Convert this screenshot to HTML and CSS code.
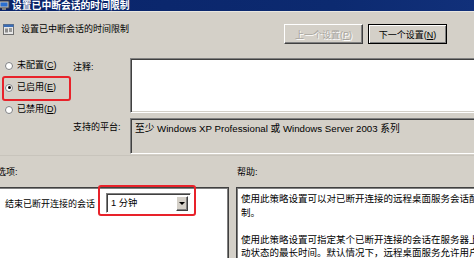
FILE: index.html
```html
<!DOCTYPE html>
<html lang="zh-CN">
<head>
<meta charset="utf-8">
<title>设置已中断会话的时间限制</title>
<link rel="stylesheet" href="styles.css">
</head>
<body>
<div class="window">
  <div class="titlebar">
    <svg class="title-icon" width="11" height="11" viewBox="0 0 11 11">
      <rect x="0" y="1" width="10" height="7" fill="#c0c0c0" stroke="#404040" stroke-width="1"/>
      <rect x="1.5" y="2.5" width="7" height="4" fill="#2a6fd0"/>
      <rect x="3" y="8" width="4" height="2" fill="#808080"/>
    </svg>
    <span class="title-text">设置已中断会话的时间限制</span>
  </div>

  <div class="header">
    <div class="policy-name">
      <svg class="policy-icon" width="11" height="11" viewBox="0 0 11 11">
        <rect x="0.5" y="0.5" width="10" height="10" fill="#e8e8e8" stroke="#707070"/>
        <rect x="0.5" y="0.5" width="10" height="2.5" fill="#3b6db5"/>
        <rect x="2" y="4.5" width="3" height="4" fill="#8c8c8c"/>
        <path d="M6 5 h3 M6 7 h3" stroke="#4a4a4a" stroke-width="1"/>
      </svg>
      <span>设置已中断会话的时间限制</span>
    </div>
    <div class="nav-buttons">
      <button class="btn" disabled>上一个设置(<u>P</u>)</button>
      <button class="btn btn-default">下一个设置(<u>N</u>)</button>
    </div>
  </div>

  <div class="config">
    <div class="radios">
      <label class="radio-item"><span class="radio"></span><span class="radio-text">未配置(<u>C</u>)</span></label>
      <label class="radio-item marked"><span class="radio checked"></span><span class="radio-text">已启用(<u>E</u>)</span></label>
      <label class="radio-item"><span class="radio"></span><span class="radio-text">已禁用(<u>D</u>)</span></label>
    </div>
    <div class="fields">
      <div class="field-label">注释:</div>
      <div class="comment-box"></div>
      <div class="field-label">支持的平台:</div>
      <div class="platform-box">至少 Windows XP Professional 或 Windows Server 2003 系列</div>
    </div>
  </div>

  <div class="pane-labels">
    <div class="pane-label options-label">选项:</div>
    <div class="pane-label help-label">帮助:</div>
  </div>

  <div class="panes">
    <div class="pane options-pane">
      <div class="option-row">
        <span class="option-text">结束已断开连接的会话</span>
        <div class="combo marked-combo">
          <span class="combo-value">1 分钟</span>
          <span class="combo-btn"><span class="arrow"></span></span>
        </div>
      </div>
    </div>
    <div class="pane help-pane">
      <p class="help-line">使用此策略设置可以对已断开连接的远程桌面服务会话配置时间限</p>
      <p class="help-line">制。</p>
      <p class="help-line blank">&nbsp;</p>
      <p class="help-line">使用此策略设置可指定某个已断开连接的会话在服务器上保持活</p>
      <p class="help-line">动状态的最长时间。默认情况下，远程桌面服务允许用户从远程</p>
    </div>
  </div>
</div>
</body>
</html>
```

FILE: styles.css
```css
* {
  box-sizing: border-box;
}

html, body {
  margin: 0;
  padding: 0;
  width: 474px;
  height: 258px;
  overflow: hidden;
  background: #d4d0c8;
}

body {
  font-family: "Liberation Sans", "Noto Sans CJK SC", sans-serif;
  font-size: 9.5px;
  color: #000;
  text-autospace: no-autospace;
}

.window {
  width: 474px;
  height: 258px;
  overflow: hidden;
  display: flex;
  flex-direction: column;
}

/* Title bar */
.titlebar {
  height: 12px;
  flex: none;
  background: linear-gradient(to right, #0a246a, #0c2a70 70%, #11307a);
  display: flex;
  align-items: center;
  padding-left: 0;
  gap: 2px;
  border-bottom: 1px solid #e8e6e0;
}

.title-icon {
  flex: none;
  margin-left: -1px;
}

.title-text {
  color: #fff;
  font-weight: bold;
  font-size: 9.8px;
  line-height: 11px;
}

/* Header */
.header {
  height: 42px;
  flex: none;
  display: flex;
  justify-content: space-between;
  align-items: flex-start;
}

.policy-name {
  display: flex;
  align-items: center;
  gap: 7px;
  margin-top: 11px;
  margin-left: 3px;
  font-size: 9px;
  line-height: 12px;
}

.nav-buttons {
  display: flex;
  gap: 5px;
  margin-top: 12px;
  margin-right: 27px;
}

.btn {
  width: 79px;
  height: 20px;
  padding: 0;
  font-family: inherit;
  font-size: 9px;
  background: #d4d0c8;
  color: #000;
  border: 1px solid;
  border-color: #fff #404040 #404040 #fff;
  box-shadow: inset -1px -1px 0 #808080;
  border-radius: 0;
  text-autospace: no-autospace;
}

.btn[disabled] {
  color: #a8a59e;
  text-shadow: 1px 1px 0 #fff;
}

.btn-default {
  border: 1px solid #000;
  box-shadow: inset 1px 1px 0 #fff, inset -1px -1px 0 #808080;
}

/* Config area */
.config {
  flex: none;
  height: 101px;
  display: flex;
}

.radios {
  width: 73px;
  flex: none;
  display: flex;
  flex-direction: column;
  gap: 9px;
  padding-top: 5px;
  padding-left: 5px;
}

.radio-item {
  display: flex;
  align-items: center;
  gap: 4px;
  height: 13px;
  font-size: 9px;
  line-height: 13px;
  position: relative;
}

.radio-text {
  white-space: nowrap;
}

.radio-item.marked::before {
  content: "";
  position: absolute;
  left: -3px;
  top: -5px;
  width: 65px;
  height: 21px;
  border: 2px solid #e8222a;
  border-radius: 3px;
}

.radio {
  width: 8px;
  height: 8px;
  border-radius: 50%;
  background: #fff;
  border: 1px solid #808080;
  box-shadow: 0 0 0 0.5px #d8d8d8;
  display: inline-flex;
  align-items: center;
  justify-content: center;
  flex: none;
}

.radio.checked::after {
  content: "";
  width: 3px;
  height: 3px;
  border-radius: 50%;
  background: #000;
}

.fields {
  flex: none;
  width: 420px;
  display: grid;
  grid-template-columns: 57px 1fr;
  grid-template-rows: 55px 36px;
  row-gap: 5px;
  padding-top: 4px;
}

.field-label {
  font-size: 9px;
  line-height: 12px;
  padding-top: 3px;
}

.comment-box {
  background: #fff;
  border: 1px solid;
  border-color: #808080 #fff #fff #808080;
  box-shadow: inset 1px 1px 0 #404040, inset -1px -1px 0 #d4d0c8;
}

.platform-box {
  background: #d4d0c8;
  border: 1px solid;
  border-color: #808080 #fff #fff #808080;
  box-shadow: inset 1px 1px 0 #404040;
  padding: 4px 0 0 4px;
  font-size: 9.7px;
  line-height: 12px;
  white-space: nowrap;
}

/* Pane labels */
.pane-labels {
  flex: none;
  height: 32px;
  display: flex;
  align-items: flex-start;
  padding-top: 10px;
  border-top: 1px solid #c8c4bc;
}

.pane-label {
  font-size: 9px;
  line-height: 12px;
}

.options-label {
  width: 240px;
  margin-left: -3px;
  flex: none;
}

/* Panes */
.panes {
  flex: 1;
  display: flex;
  gap: 7px;
  min-height: 0;
}

.pane {
  background: #fff;
  border: 1px solid;
  border-color: #404040 #fff #fff #404040;
  box-shadow: inset 1px 1px 0 #808080;
  height: 80px;
}

.options-pane {
  width: 231px;
  flex: none;
  margin-left: -2px;
  border-right-color: #404040;
  box-shadow: inset 1px 1px 0 #808080, inset -1px 0 0 #808080;
  padding: 5px 0 0 6px;
}

.option-row {
  display: flex;
  align-items: flex-start;
  gap: 11px;
}

.option-text {
  font-size: 9px;
  line-height: 12px;
  padding-top: 5px;
  white-space: nowrap;
}

.combo {
  width: 85px;
  height: 20px;
  background: #fff;
  border: 1px solid;
  border-color: #808080 #fff #fff #808080;
  box-shadow: inset 1px 1px 0 #404040;
  display: flex;
  align-items: center;
  justify-content: space-between;
  padding: 1px 2px 1px 3px;
  position: relative;
}

.marked-combo::before {
  content: "";
  position: absolute;
  left: -9px;
  top: -9px;
  right: -6px;
  bottom: -4px;
  border: 2px solid #e8222a;
  border-radius: 3px;
}

.combo-value {
  font-size: 9.3px;
  line-height: 12px;
  padding-left: 1px;
}

.combo-btn {
  width: 12px;
  height: 15px;
  background: #d4d0c8;
  border: 1px solid;
  border-color: #fff #404040 #404040 #fff;
  box-shadow: inset -1px -1px 0 #808080;
  display: flex;
  align-items: center;
  justify-content: center;
}

.arrow {
  width: 0;
  height: 0;
  border-left: 3px solid transparent;
  border-right: 3px solid transparent;
  border-top: 3px solid #000;
}

.help-pane {
  flex: none;
  width: 300px;
  padding: 4px 0 0 4px;
}

.help-line {
  margin: 0;
  font-size: 9.5px;
  line-height: 13.5px;
  white-space: nowrap;
}
```
